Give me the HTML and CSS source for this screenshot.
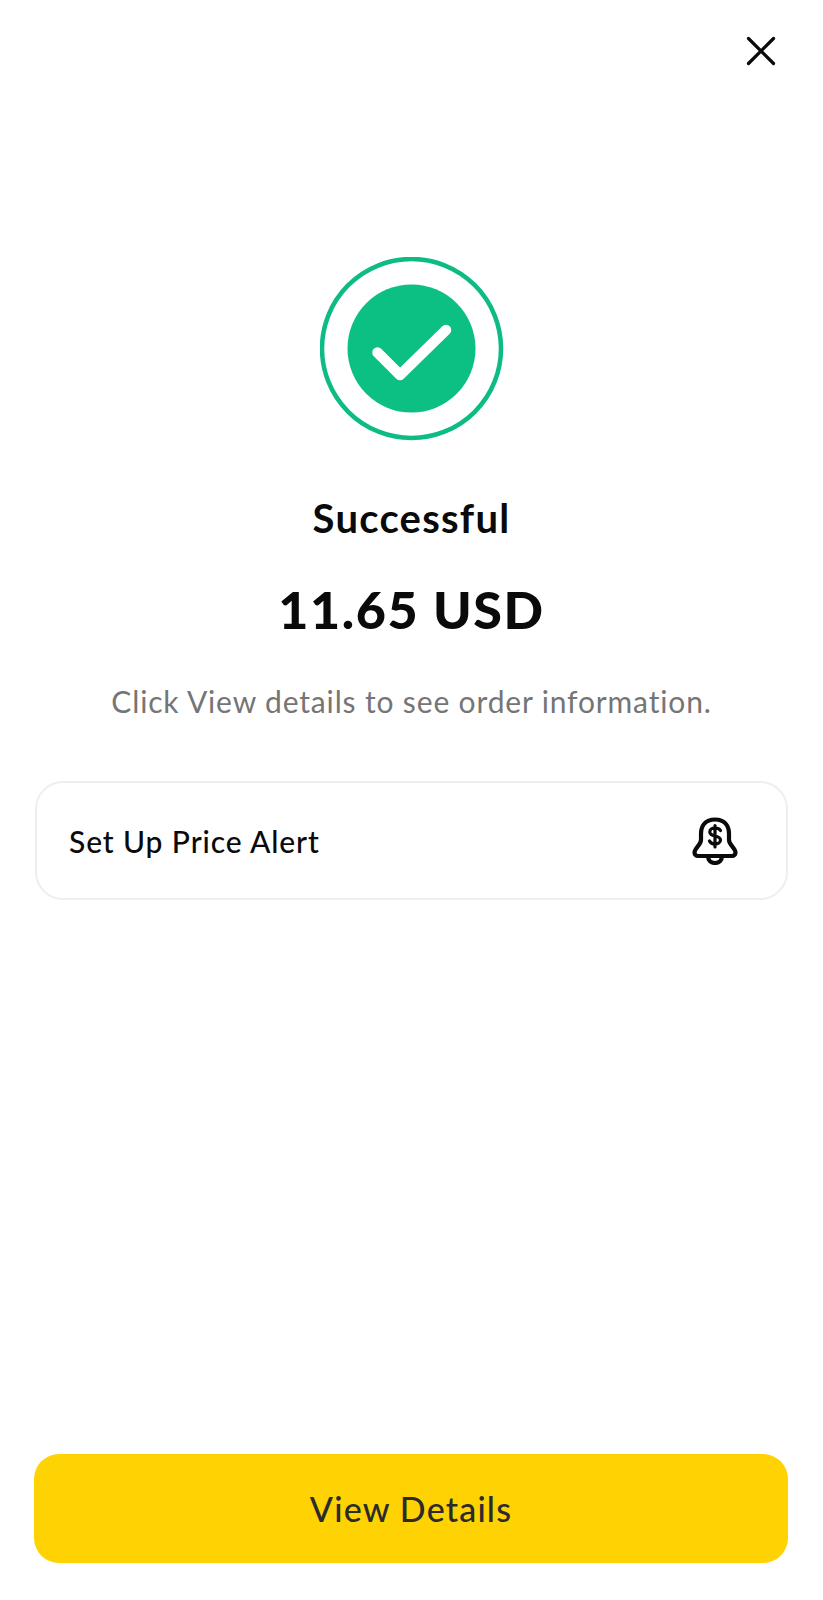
FILE: index.html
```html
<!DOCTYPE html>
<html lang="en">
<head>
<meta charset="utf-8">
<title>Successful</title>
<link rel="stylesheet" href="styles.css">
</head>
<body>
<main class="page">
  <header class="top">
    <button class="close" aria-label="Close">
      <svg width="32" height="32" viewBox="0 0 32 32" fill="none" stroke="#0a0a0a" stroke-width="3.2" stroke-linecap="round"><path d="M3.500 3.500 28.500 28.500M28.500 3.500 3.500 28.500"/></svg>
    </button>
  </header>
  <section class="result">
    <svg class="badge" width="184" height="184" viewBox="0 0 184 184">
      <circle cx="91.500" cy="91.500" r="89.500" fill="#fff" stroke="#0dbb85" stroke-width="4.500"/>
      <circle cx="91.500" cy="91.500" r="64" fill="#0cc083"/>
      <path d="M57.500 95.500 80 118 126 73" fill="none" stroke="#fff" stroke-width="10.500" stroke-linecap="round" stroke-linejoin="round"/>
    </svg>
    <h1 class="title">Successful</h1>
    <p class="amount">11.65 USD</p>
    <p class="hint">Click View details to see order information.</p>
  </section>
  <section class="alert">
    <span class="alert-label">Set Up Price Alert</span>
    <svg class="bell" width="46" height="48" viewBox="0 0 46 48" fill="none" stroke="#0a0a0a" stroke-width="4.200" stroke-linecap="round" stroke-linejoin="round">
      <path d="M23 2.500C13 2.500 9 9 9 17V23C9 28 2.500 31 2.500 35.500 2.500 37.500 4 39 6 39H40C42 39 43.500 37.500 43.500 35.500 43.500 31 37 28 37 23V17C37 9 33 2.500 23 2.500Z"/>
      <path d="M16 39C16 43.500 19 46 23 46S30 43.500 30 39"/>
      <path stroke-width="3.200" d="M28.500 13.500C27.500 11.800 25.500 11 23 11 20 11 17.800 12.500 17.800 15 17.800 20.500 28.500 17.500 28.500 23 28.500 25.500 26 27 23 27 20.500 27 18.500 26 17.500 24M23 8.500V30"/>
    </svg>
  </section>
  <div class="spacer"></div>
  <button class="primary">View Details</button>
</main>
</body>
</html>
```
FILE: styles.css
```css
* { box-sizing: border-box; }
html, body { margin: 0; padding: 0; background: #fff; }
body { font-family: "Lato", "Liberation Sans", sans-serif; color: #0a0a0a; }
.page { width: 823px; height: 1600px; display: flex; flex-direction: column; padding: 35px 35px 37px 34px; }
.top { display: flex; justify-content: flex-end; height: 32px; }
.close { border: 0; background: none; padding: 0; width: 32px; height: 32px; margin-right: 11px; }
.close svg { display: block; }
.result { display: flex; flex-direction: column; align-items: center; padding: 190px 0 0 1px; }
.badge { display: block; }
.title { margin: 54px 0 0; font-size: 40px; line-height: 46px; font-weight: 700; letter-spacing: 1.25px; }
.amount { margin: 38px 0 0; font-size: 52px; line-height: 60px; font-weight: 900; letter-spacing: 1.55px; }
.hint { margin: 43px 0 0; font-size: 30px; line-height: 38px; color: #757575; letter-spacing: 0.85px; }
.alert { margin: 61px 0 0 1px; height: 119px; border: 2px solid #eeeeee; border-radius: 28px; display: flex; align-items: center; justify-content: space-between; padding: 0 48px 0 32px; }
.alert-label { font-size: 30px; font-weight: 500; letter-spacing: 0.9px; }
.spacer { flex: 1; }
.primary { height: 109px; border: 0; border-radius: 25px; background: #fed203; font: 500 34px "Lato", "Liberation Sans", sans-serif; letter-spacing: 1.2px; color: #2b2b2b; }
```
